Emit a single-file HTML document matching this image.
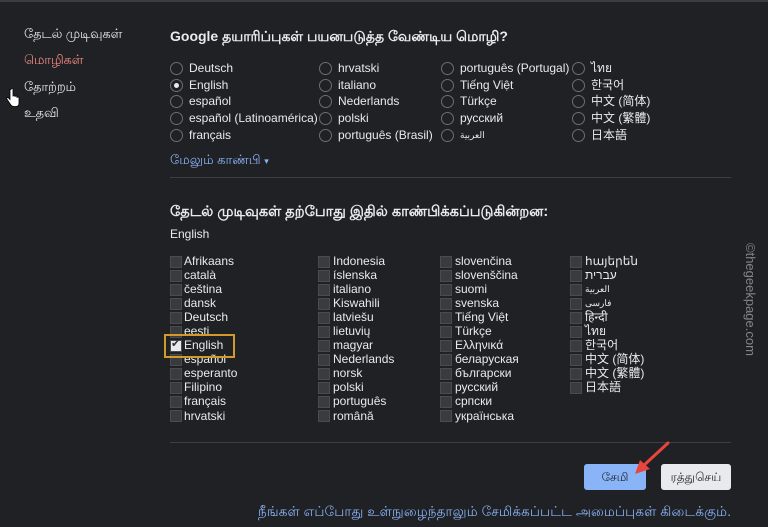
<!DOCTYPE html>
<html><head><meta charset="utf-8"><style>
body{margin:0;width:768px;height:527px;background:#202124;overflow:hidden;position:relative;font-family:"Liberation Sans","Noto Sans CJK SC",sans-serif;color:#e8eaed}
.a{position:absolute;white-space:nowrap;font-size:12px;line-height:14px}
.r{position:absolute;width:11px;height:11px;border:1px solid #6b6e72;border-radius:50%}
.r.on::after{content:"";position:absolute;left:3px;top:3px;width:5px;height:5px;border-radius:50%;background:#e8eaed}
.c{position:absolute;width:10px;height:10px;background:#3a3b3e;border:1px solid #4a4b4e}
.nav{position:absolute;left:24px;font-size:12.8px;font-family:"Liberation Sans","Noto Sans CJK SC",sans-serif}
.hr{position:absolute;left:170px;width:561px;height:1px;background:#3c4043}
</style></head><body>
<div style="position:absolute;left:0;top:0;width:768px;height:2px;background:#3c3d40"></div>
<div class="nav" style="top:26px">தேடல் முடிவுகள்</div>
<div class="nav" style="top:52px;color:#f28b82">மொழிகள்</div>
<div class="nav" style="top:79px">தோற்றம்</div>
<div class="nav" style="top:105px">உதவி</div>
<svg style="position:absolute;left:6px;top:88px" width="14" height="20" viewBox="0 0 14 20"><path d="M4 1.5v10l-1.5-1.5c-1-1-2.5 0-1.5 1.2l3.5 5.3c.8 1.2 1.8 2 3.5 2h2c2 0 3-1.5 3-3.5v-5c0-1.5-2-1.5-2 0v-1c0-1.5-2-1.5-2 0v-.5c0-1.5-2-1.5-2 0V1.5c0-1.5-2-1.5-2 0z" fill="#fff" stroke="#000" stroke-width=".8"/></svg>

<div class="a" style="left:170px;top:29px;font-size:14px;font-weight:bold">Google தயாரிப்புகள் பயனபடுத்த வேண்டிய மொழி?</div>

<div class="r" style="left:170px;top:62px"></div><div class="a" style="left:189px;top:61px">Deutsch</div>
<div class="r on" style="left:170px;top:79px"></div><div class="a" style="left:189px;top:78px">English</div>
<div class="r" style="left:170px;top:95px"></div><div class="a" style="left:189px;top:94px">español</div>
<div class="r" style="left:170px;top:112px"></div><div class="a" style="left:189px;top:111px">español (Latinoamérica)</div>
<div class="r" style="left:170px;top:129px"></div><div class="a" style="left:189px;top:128px">français</div>

<div class="r" style="left:319px;top:62px"></div><div class="a" style="left:338px;top:61px">hrvatski</div>
<div class="r" style="left:319px;top:79px"></div><div class="a" style="left:338px;top:78px">italiano</div>
<div class="r" style="left:319px;top:95px"></div><div class="a" style="left:338px;top:94px">Nederlands</div>
<div class="r" style="left:319px;top:112px"></div><div class="a" style="left:338px;top:111px">polski</div>
<div class="r" style="left:319px;top:129px"></div><div class="a" style="left:338px;top:128px">português (Brasil)</div>

<div class="r" style="left:441px;top:62px"></div><div class="a" style="left:460px;top:61px">português (Portugal)</div>
<div class="r" style="left:441px;top:79px"></div><div class="a" style="left:460px;top:78px">Tiếng Việt</div>
<div class="r" style="left:441px;top:95px"></div><div class="a" style="left:460px;top:94px">Türkçe</div>
<div class="r" style="left:441px;top:112px"></div><div class="a" style="left:460px;top:111px">русский</div>
<div class="r" style="left:441px;top:129px"></div><div class="a" style="left:460px;top:128px;font-size:9px">العربية</div>

<div class="r" style="left:572px;top:62px"></div><div class="a" style="left:591px;top:61px">ไทย</div>
<div class="r" style="left:572px;top:79px"></div><div class="a" style="left:591px;top:78px">한국어</div>
<div class="r" style="left:572px;top:95px"></div><div class="a" style="left:591px;top:94px">中文 (简体)</div>
<div class="r" style="left:572px;top:112px"></div><div class="a" style="left:591px;top:111px">中文 (繁體)</div>
<div class="r" style="left:572px;top:129px"></div><div class="a" style="left:591px;top:128px">日本語</div>

<div class="a" style="left:170px;top:153px;color:#8ab4f8;font-size:13px">மேலும் காண்பி <span style="font-size:9px">▾</span></div>
<div class="hr" style="top:177px"></div>

<div class="a" style="left:170px;top:205px;font-size:14.5px;font-weight:bold">தேடல் முடிவுகள் தற்போது இதில் காண்பிக்கப்படுகின்றன:</div>
<div class="a" style="left:170px;top:227px">English</div>

<div class="c" style="left:170px;top:256px"></div><div class="a" style="left:184px;top:254px">Afrikaans</div>
<div class="c" style="left:170px;top:270px"></div><div class="a" style="left:184px;top:268px">català</div>
<div class="c" style="left:170px;top:284px"></div><div class="a" style="left:184px;top:282px">čeština</div>
<div class="c" style="left:170px;top:298px"></div><div class="a" style="left:184px;top:296px">dansk</div>
<div class="c" style="left:170px;top:312px"></div><div class="a" style="left:184px;top:310px">Deutsch</div>
<div class="c" style="left:170px;top:326px"></div><div class="a" style="left:184px;top:324px">eesti</div>
<div class="c" style="left:170px;top:340px;background:#e8eaed"></div><div class="a" style="left:171px;top:337px;color:#333;font-size:11px">✔</div><div class="a" style="left:184px;top:338px">English</div>
<div class="c" style="left:170px;top:354px"></div><div class="a" style="left:184px;top:352px">español</div>
<div class="c" style="left:170px;top:368px"></div><div class="a" style="left:184px;top:366px">esperanto</div>
<div class="c" style="left:170px;top:382px"></div><div class="a" style="left:184px;top:380px">Filipino</div>
<div class="c" style="left:170px;top:396px"></div><div class="a" style="left:184px;top:394px">français</div>
<div class="c" style="left:170px;top:410px"></div><div class="a" style="left:184px;top:409px">hrvatski</div>
<div style="position:absolute;left:164px;top:334px;width:67px;height:20px;border:2px solid #d39a2a"></div>

<div class="c" style="left:318px;top:256px"></div><div class="a" style="left:333px;top:254px">Indonesia</div>
<div class="c" style="left:318px;top:270px"></div><div class="a" style="left:333px;top:268px">íslenska</div>
<div class="c" style="left:318px;top:284px"></div><div class="a" style="left:333px;top:282px">italiano</div>
<div class="c" style="left:318px;top:298px"></div><div class="a" style="left:333px;top:296px">Kiswahili</div>
<div class="c" style="left:318px;top:312px"></div><div class="a" style="left:333px;top:310px">latviešu</div>
<div class="c" style="left:318px;top:326px"></div><div class="a" style="left:333px;top:324px">lietuvių</div>
<div class="c" style="left:318px;top:340px"></div><div class="a" style="left:333px;top:338px">magyar</div>
<div class="c" style="left:318px;top:354px"></div><div class="a" style="left:333px;top:352px">Nederlands</div>
<div class="c" style="left:318px;top:368px"></div><div class="a" style="left:333px;top:366px">norsk</div>
<div class="c" style="left:318px;top:382px"></div><div class="a" style="left:333px;top:380px">polski</div>
<div class="c" style="left:318px;top:396px"></div><div class="a" style="left:333px;top:394px">português</div>
<div class="c" style="left:318px;top:410px"></div><div class="a" style="left:333px;top:409px">română</div>

<div class="c" style="left:440px;top:256px"></div><div class="a" style="left:455px;top:254px">slovenčina</div>
<div class="c" style="left:440px;top:270px"></div><div class="a" style="left:455px;top:268px">slovenščina</div>
<div class="c" style="left:440px;top:284px"></div><div class="a" style="left:455px;top:282px">suomi</div>
<div class="c" style="left:440px;top:298px"></div><div class="a" style="left:455px;top:296px">svenska</div>
<div class="c" style="left:440px;top:312px"></div><div class="a" style="left:455px;top:310px">Tiếng Việt</div>
<div class="c" style="left:440px;top:326px"></div><div class="a" style="left:455px;top:324px">Türkçe</div>
<div class="c" style="left:440px;top:340px"></div><div class="a" style="left:455px;top:338px">Ελληνικά</div>
<div class="c" style="left:440px;top:354px"></div><div class="a" style="left:455px;top:352px">беларуская</div>
<div class="c" style="left:440px;top:368px"></div><div class="a" style="left:455px;top:366px">български</div>
<div class="c" style="left:440px;top:382px"></div><div class="a" style="left:455px;top:380px">русский</div>
<div class="c" style="left:440px;top:396px"></div><div class="a" style="left:455px;top:394px">српски</div>
<div class="c" style="left:440px;top:410px"></div><div class="a" style="left:455px;top:409px">українська</div>

<div class="c" style="left:570px;top:256px"></div><div class="a" style="left:585px;top:254px">հայերեն</div>
<div class="c" style="left:570px;top:270px"></div><div class="a" style="left:585px;top:268px">עברית</div>
<div class="c" style="left:570px;top:284px"></div><div class="a" style="left:585px;top:282px;font-size:9px">العربية</div>
<div class="c" style="left:570px;top:298px"></div><div class="a" style="left:585px;top:296px;font-size:9px">فارسی</div>
<div class="c" style="left:570px;top:312px"></div><div class="a" style="left:585px;top:310px">हिन्दी</div>
<div class="c" style="left:570px;top:326px"></div><div class="a" style="left:585px;top:324px">ไทย</div>
<div class="c" style="left:570px;top:340px"></div><div class="a" style="left:585px;top:338px">한국어</div>
<div class="c" style="left:570px;top:354px"></div><div class="a" style="left:585px;top:352px">中文 (简体)</div>
<div class="c" style="left:570px;top:368px"></div><div class="a" style="left:585px;top:366px">中文 (繁體)</div>
<div class="c" style="left:570px;top:382px"></div><div class="a" style="left:585px;top:380px">日本語</div>

<div class="a" style="left:757px;top:243px;transform-origin:0 0;transform:rotate(90deg);color:#80868b;font-size:13px">©thegeekpage.com</div>

<div class="hr" style="top:442px"></div>

<div style="position:absolute;left:584px;top:464px;width:62px;height:26px;background:#8ab4f8;border-radius:3px;color:#202124;font-size:12px;line-height:26px;text-align:center">சேமி</div>
<div style="position:absolute;left:661px;top:464px;width:70px;height:26px;background:#e8eaed;border-radius:3px;color:#202124;font-size:12px;line-height:26px;text-align:center">ரத்துசெய்</div>
<svg style="position:absolute;left:630px;top:440px" width="45" height="45"><line x1="38" y1="3" x2="12" y2="27" stroke="#e8453c" stroke-width="3" stroke-linecap="round"/><polygon points="5,34 10,20 20,29" fill="#e8453c"/></svg>

<div class="a" style="right:37px;top:505px;color:#8ab4f8;font-size:13.7px">நீங்கள் எப்போது உள்நுழைந்தாலும் சேமிக்கப்பட்ட அமைப்புகள் கிடைக்கும்.</div>
</body></html>
